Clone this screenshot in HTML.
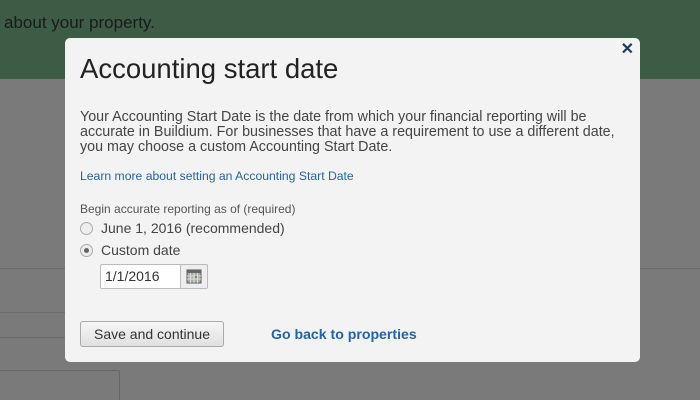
<!DOCTYPE html>
<html><head><style>
html,body{margin:0;width:700px;height:400px;overflow:hidden}
body{background:#7a7a7a;font-family:"Liberation Sans",Arial,sans-serif;position:relative}
.hdr{position:absolute;left:0;top:0;width:700px;height:79px;background:#3d5c45}
.hdr span{position:absolute;left:4px;top:13px;font-size:17px;color:#1a1a1a}
.ln{position:absolute;background:#6a6a6a;height:1px}
.modal{position:absolute;left:65px;top:38px;width:575px;height:324px;background:#f3f3f3;border-radius:5px}
.abs{position:absolute;white-space:nowrap}
h1{position:absolute;left:15px;top:15px;margin:0;font-weight:normal;font-size:27.5px;color:#222}
.p{left:15px;top:72px;font-size:14.3px;line-height:15px;color:#444}
.lnk{left:15px;top:131px;font-size:12.2px;color:#2463a8}
.lab{left:15px;top:164px;font-size:12px;color:#555}
.r{left:15px;font-size:14px;color:#444}
.rad{display:inline-block;width:11px;height:11px;border:1px solid #aaa;border-radius:50%;background:#eee;vertical-align:-2px;margin-right:8px;position:relative}
.rad.on::after{content:"";position:absolute;left:3px;top:3px;width:5px;height:5px;border-radius:50%;background:#666}
.inp{left:35px;top:226px;width:76px;height:23px;border:1px solid #bbb;background:#fff;font-size:14px;line-height:23px;padding-left:4px;color:#333;border-radius:2px 0 0 2px}
.cal{left:115px;top:226px;width:26px;height:23px;border:1px solid #bbb;background:#eee;border-radius:0 2px 2px 0}
.btn{left:15px;top:283px;width:142px;height:24px;border:1px solid #aaa;border-radius:3px;background:linear-gradient(#f6f6f6,#e0e0e0);font-size:14px;line-height:24px;text-align:center;color:#333}
.back{left:206px;top:288px;font-size:14.1px;font-weight:bold;color:#2463a8}
.x{right:6px;top:1px;font-size:16px;font-weight:bold;color:#1d3a60}
</style></head><body>
<div class="hdr"><span>about your property.</span></div>
<div class="ln" style="left:0;top:268px;width:700px"></div>
<div class="ln" style="left:0;top:312px;width:66px"></div>
<div class="ln" style="left:0;top:337px;width:66px"></div>
<div style="position:absolute;left:-1px;top:370px;width:119px;height:29px;border:1px solid #666;border-bottom:none;border-radius:2px 2px 0 0"></div>
<div class="modal">
<div class="abs x">✕</div>
<h1>Accounting start date</h1>
<div class="abs p">Your Accounting Start Date is the date from which your financial reporting will be<br>accurate in Buildium. For businesses that have a requirement to use a different date,<br>you may choose a custom Accounting Start Date.</div>
<div class="abs lnk">Learn more about setting an Accounting Start Date</div>
<div class="abs lab">Begin accurate reporting as of (required)</div>
<div class="abs r" style="top:182px"><span class="rad"></span>June 1, 2016 (recommended)</div>
<div class="abs r" style="top:204px"><span class="rad on"></span>Custom date</div>
<div class="abs inp">1/1/2016</div>
<div class="abs cal"><svg width="26" height="23"><rect x="6" y="5" width="14" height="13" fill="#aaa" stroke="#555"/><rect x="6" y="5" width="14" height="3" fill="#666"/><g stroke="#ddd" stroke-width="1"><path d="M6 11h14M6 14h14M9.5 8v10M13 8v10M16.5 8v10"/></g><rect x="14" y="11" width="2" height="2" fill="#4a4"/></svg></div>
<div class="abs btn">Save and continue</div>
<div class="abs back">Go back to properties</div>
</div>
</body></html>
